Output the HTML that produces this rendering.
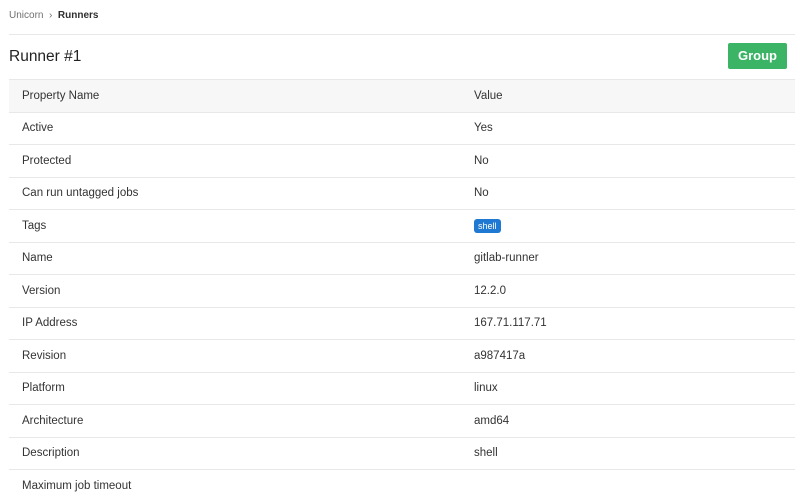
<!DOCTYPE html>
<html><head><meta charset="utf-8"><style>
body{margin:0;width:800px;height:498px;overflow:hidden;background:#fff;font-family:"Liberation Sans",sans-serif;color:#2e2e2e;}
.bc{position:absolute;left:9px;top:10px;font-size:10px;color:#707070}
.bc b{color:#2e2e2e}
.hr{position:absolute;left:9px;right:5px;top:34px;height:1px;background:#e8e8e8}
h1{position:absolute;left:9px;top:48px;margin:0;font-size:15.5px;font-weight:normal;color:#222}
.btn{position:absolute;left:728px;top:43px;width:59px;height:26px;background:#3bb466;color:#fff;font-weight:bold;font-size:13px;line-height:26px;text-align:center;border-radius:2px}
table{position:absolute;left:9px;top:79px;width:786px;border-collapse:collapse;font-size:11.5px}
td{height:31.5px;border-top:1px solid #e8e8e8;padding:0 0 0 13px;color:#333}
td:nth-child(2){padding-left:0}
tr:first-child td{background:#f7f7f7;}
.tag{background:#1f78d1;color:#fff;font-size:9px;padding:2px 4px;border-radius:3px}
</style></head><body>
<div class="bc">Unicorn &nbsp;›&nbsp; <b>Runners</b></div>
<div class="hr"></div>
<h1>Runner #1</h1>
<div class="btn">Group</div>
<table>
<tr><td style="width:452px">Property Name</td><td>Value</td></tr>
<tr><td>Active</td><td>Yes</td></tr>
<tr><td>Protected</td><td>No</td></tr>
<tr><td>Can run untagged jobs</td><td>No</td></tr>
<tr><td>Tags</td><td><span class="tag">shell</span></td></tr>
<tr><td>Name</td><td>gitlab-runner</td></tr>
<tr><td>Version</td><td>12.2.0</td></tr>
<tr><td>IP Address</td><td>167.71.117.71</td></tr>
<tr><td>Revision</td><td>a987417a</td></tr>
<tr><td>Platform</td><td>linux</td></tr>
<tr><td>Architecture</td><td>amd64</td></tr>
<tr><td>Description</td><td>shell</td></tr>
<tr><td>Maximum job timeout</td><td></td></tr>
</table>
</body></html>
